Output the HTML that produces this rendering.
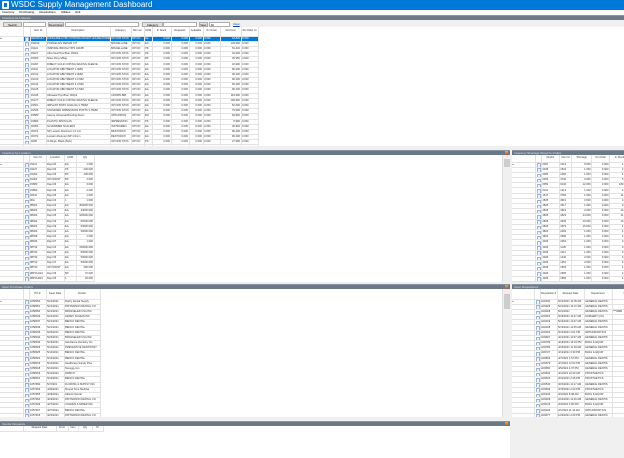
<!DOCTYPE html>
<html><head><meta charset="utf-8"><style>
*{margin:0;padding:0;box-sizing:border-box}
body{width:624px;height:458px;overflow:hidden;background:#f0f0f0;font-family:"Liberation Sans",sans-serif;position:relative}
.abs{position:absolute}
.title{left:0;top:0;width:624px;height:10px;background:#0078d7;color:#fff;font-size:8px;line-height:10px;padding-left:11px}
.logo{left:2px;top:1px;width:7px;height:8px;background:#fff;border-radius:1px}
.logo:after{content:"";position:absolute;left:2px;top:2px;width:3px;height:4px;background:#0078d7}
.menu{left:0;top:10px;width:624px;height:5px;font-size:3px;line-height:5px;background:#fafafa;color:#000}
.menu span{margin:0 3px 0 2px}
.ph{height:5px;background:#6b7886;border-top:1px solid #8794a1;color:#dfe4ea;font-size:3px;line-height:4px;padding-left:2px}
.ph i{position:absolute;right:2px;top:0;width:3px;height:4px;background:linear-gradient(#f0b020,#e04020)}
.white{background:#fff}
table{border-collapse:collapse;table-layout:fixed;font-size:2.6px;color:#333;background:#fff}
td,th{height:5.2px;border-right:0.5px solid #e2e2e2;border-bottom:0.5px solid #e2e2e2;white-space:nowrap;overflow:hidden;padding:0 0.6px;line-height:4px;font-weight:normal}
th{text-align:center;background:#fff}
td.r{text-align:right}
td.h{background:#fff}
td.ic{position:relative}
td.ic:after{content:"";position:absolute;left:1.5px;top:0.8px;width:2px;height:2.5px;border:0.3px solid #9ab4d6;background:#f2f6fc}
tr.sel td{background:#0078d7;color:#fff}
tr.sel td.h{background:#fff;color:#000}
.sb{background:#f0f0f0;border-left:0.5px solid #ddd}
.sb i{position:absolute;left:1px;width:6px;background:#cdcdcd}
.btn{top:22px;height:5px;font-size:2.8px;line-height:5px;text-align:center;background:#e1e1e1;border:0.5px solid #adadad}
.cmb{top:22px;height:5px;background:#fff;border:0.5px solid #adadad}
</style></head><body>
<div class="abs title">WSDC Supply Management Dashboard</div>
<div class="abs logo"></div>
<div class="abs menu"><span>Inventory</span><span>Purchasing</span><span>Requisitions</span><span>Utilities</span><span>Exit</span></div>
<div class="abs ph" style="left:0;top:15px;width:624px">Inventory At A Glance</div>
<div class="abs btn" style="left:3px;width:19px">Search Items:</div>
<div class="abs cmb" style="left:23px;width:23px"></div>
<div class="abs btn" style="left:48px;width:16px">Description:</div>
<div class="abs cmb" style="left:65px;width:74px"></div>
<div class="abs btn" style="left:142px;width:21px">Category Filter:</div>
<div class="abs cmb" style="left:163px;width:34px"></div>
<div class="abs btn" style="left:199px;width:9px">View:</div>
<div class="abs cmb" style="left:209px;width:21px;font-size:2.8px;line-height:4px">&nbsp;All</div>
<div class="abs" style="left:233px;top:22px;font-size:2.8px;line-height:5px;color:#0645ad;text-decoration:underline">Clear</div>

<div class="abs white" style="left:0;top:27px;width:624px;height:119px"></div>
<table class="abs" style="left:0;top:27px;width:258px">
<colgroup><col style="width:23px"><col style="width:7px"><col style="width:16px"><col style="width:64px"><col style="width:21px"><col style="width:13px"><col style="width:8px"><col style="width:19px"><col style="width:18px"><col style="width:14px"><col style="width:17px"><col style="width:21px"><col style="width:17px"></colgroup>
<tr><th style="height:9px"></th><th></th><th>Item Id</th><th>Description</th><th>Category</th><th>Bin Loc</th><th>UOM</th><th>In Stock</th><th>Requests</th><th>Available</th><th>On Order</th><th>Std Cost</th><th>Re-Order At</th></tr>
<tr class="sel"><td class="h">▸</td><td class="ic"></td><td>3324PCA-T</td><td>LONGUIDE UTPH 3 PRONG MOUNT HOUSE POWER</td><td>OP NON STCK</td><td>OP NO</td><td>EA</td><td class="r">0.000</td><td class="r">0.000</td><td class="r">0.000</td><td>0.000</td><td class="r">18.820</td><td>0.000</td></tr>
<tr><td class="h"></td><td class="ic"></td><td>#11190</td><td>PORCELAIN REPAIR KIT</td><td>MISCELLANE</td><td>OP NO</td><td>EA</td><td class="r">0.000</td><td class="r">0.000</td><td class="r">0.000</td><td>0.000</td><td class="r">103.990</td><td>0.000</td></tr>
<tr><td class="h"></td><td class="ic"></td><td>#1121</td><td>INSPIRAL BRUSH TIPS 100/PK</td><td>MISCELLANE</td><td>OP NO</td><td>PK</td><td class="r">0.000</td><td class="r">0.000</td><td class="r">0.000</td><td>0.000</td><td class="r">63.440</td><td>0.000</td></tr>
<tr><td class="h"></td><td class="ic"></td><td>#1127</td><td>Ultra Seal Tips Blue 100/pk</td><td>OP NON STCK</td><td>OP NO</td><td>PK</td><td class="r">0.000</td><td class="r">0.000</td><td class="r">0.000</td><td>0.000</td><td class="r">34.490</td><td>0.000</td></tr>
<tr><td class="h"></td><td class="ic"></td><td>#1302</td><td>Mixer Ring 1/Bag</td><td>OP NON STCK</td><td>OP NO</td><td>BX</td><td class="r">2.000</td><td class="r">0.000</td><td class="r">2.000</td><td>0.000</td><td class="r">36.950</td><td>0.000</td></tr>
<tr><td class="h"></td><td class="ic"></td><td>#1397</td><td>DIRECT GOLD COPING WAXING SLEEVE</td><td>OP NON STCK</td><td>OP NO</td><td>EA</td><td class="r">0.000</td><td class="r">0.000</td><td class="r">0.000</td><td>0.000</td><td class="r">32.990</td><td>0.000</td></tr>
<tr><td class="h"></td><td class="ic"></td><td>#1411</td><td>LOCATOR ABUTMENT 1.0MM</td><td>OP NON STCK</td><td>OP NO</td><td>EA</td><td class="r">0.000</td><td class="r">0.000</td><td class="r">0.000</td><td>0.000</td><td class="r">96.200</td><td>0.000</td></tr>
<tr><td class="h"></td><td class="ic"></td><td>#1412</td><td>LOCATOR ABUTMENT 2.0MM</td><td>OP NON STCK</td><td>OP NO</td><td>EA</td><td class="r">0.000</td><td class="r">0.000</td><td class="r">0.000</td><td>0.000</td><td class="r">96.200</td><td>0.000</td></tr>
<tr><td class="h"></td><td class="ic"></td><td>#1413</td><td>LOCATOR ABUTMENT 3.0 MM</td><td>OP NON STCK</td><td>OP NO</td><td>EA</td><td class="r">0.000</td><td class="r">0.000</td><td class="r">0.000</td><td>0.000</td><td class="r">96.200</td><td>0.000</td></tr>
<tr><td class="h"></td><td class="ic"></td><td>#1414</td><td>LOCATOR ABUTMENT 4.0 MM</td><td>OP NON STCK</td><td>OP NO</td><td>EA</td><td class="r">0.000</td><td class="r">0.000</td><td class="r">0.000</td><td>0.000</td><td class="r">96.200</td><td>0.000</td></tr>
<tr><td class="h"></td><td class="ic"></td><td>#1415</td><td>LOCATOR ABUTMENT 5.0 MM</td><td>OP NON STCK</td><td>OP NO</td><td>EA</td><td class="r">0.000</td><td class="r">0.000</td><td class="r">0.000</td><td>0.000</td><td class="r">96.200</td><td>0.000</td></tr>
<tr><td class="h"></td><td class="ic"></td><td>#1436</td><td>Ultraseal Tips Blue 100/pk</td><td>CROWN BRI</td><td>OP NO</td><td>EA</td><td class="r">0.000</td><td class="r">0.000</td><td class="r">0.000</td><td>0.000</td><td class="r">119.990</td><td>0.000</td></tr>
<tr><td class="h"></td><td class="ic"></td><td>#1477</td><td>DIRECT GOLD COPING WAXING SLEEVE</td><td>OP NON STCK</td><td>OP NO</td><td>EA</td><td class="r">0.000</td><td class="r">0.000</td><td class="r">0.000</td><td>0.000</td><td class="r">199.990</td><td>0.000</td></tr>
<tr><td class="h"></td><td class="ic"></td><td>#1501</td><td>IMPLANT BODY ANALOG 3.75MM</td><td>OP NON STCK</td><td>OP NO</td><td>EA</td><td class="r">0.000</td><td class="r">0.000</td><td class="r">0.000</td><td>0.000</td><td class="r">52.600</td><td>0.000</td></tr>
<tr><td class="h"></td><td class="ic"></td><td>#1536</td><td>STANDARD IMPRESSION POSTS 3.75MM</td><td>OP NON STCK</td><td>OP NO</td><td>EA</td><td class="r">0.000</td><td class="r">0.000</td><td class="r">0.000</td><td>0.000</td><td class="r">79.500</td><td>0.000</td></tr>
<tr><td class="h"></td><td class="ic"></td><td>#1580</td><td>Assure Universal Bonding Resin</td><td>ORTHODON</td><td>OP NO</td><td>BO</td><td class="r">0.000</td><td class="r">0.000</td><td class="r">0.000</td><td>0.000</td><td class="r">69.990</td><td>0.000</td></tr>
<tr><td class="h"></td><td class="ic"></td><td>#1890</td><td>PLASTIC SPATULAS</td><td>IMPRESSION</td><td>OP NO</td><td>PK</td><td class="r">0.000</td><td class="r">0.000</td><td class="r">0.000</td><td>0.000</td><td class="r">8.990</td><td>0.000</td></tr>
<tr><td class="h"></td><td class="ic"></td><td>#2054</td><td>SCHORMER SCALERS</td><td>INSTRUMEN</td><td>OP NO</td><td>EA</td><td class="r">0.000</td><td class="r">0.000</td><td class="r">0.000</td><td>0.000</td><td class="r">30.900</td><td>0.000</td></tr>
<tr><td class="h"></td><td class="ic"></td><td>#2071</td><td>NP Locator Abutment 1.0 mm</td><td>RESTORATI</td><td>OP NO</td><td>EA</td><td class="r">0.000</td><td class="r">0.000</td><td class="r">0.000</td><td>0.000</td><td class="r">96.200</td><td>0.000</td></tr>
<tr><td class="h"></td><td class="ic"></td><td>#2072</td><td>Locator Abutment NP 4.0mm</td><td>RESTORATI</td><td>OP NO</td><td>EA</td><td class="r">0.000</td><td class="r">0.000</td><td class="r">0.000</td><td>0.000</td><td class="r">96.200</td><td>0.000</td></tr>
<tr><td class="h"></td><td class="ic"></td><td>#206</td><td>O-Rings, Black (5/pk)</td><td>OP NON STCK</td><td>OP NO</td><td>PK</td><td class="r">0.000</td><td class="r">0.000</td><td class="r">0.000</td><td>0.000</td><td class="r">27.990</td><td>0.000</td></tr>
<tr><td class="h"></td><td class="ic"></td><td>#2013</td><td>Rubber Dam Punch Set</td><td>INSTRUMEN</td><td>OP NO</td><td>EA</td><td class="r">0.000</td><td class="r">0.000</td><td class="r">0.000</td><td>0.000</td><td class="r">5.570</td><td>0.000</td></tr>
</table>
<div class="abs" style="left:0;top:146px;width:624px;height:4px;background:#f0f0f0"></div>

<div class="abs ph" style="left:0;top:150px;width:510px">Inventory by Location<i></i></div>
<div class="abs white" style="left:0;top:155px;width:502px;height:127px;overflow:hidden">
<table style="width:94px">
<colgroup><col style="width:23px"><col style="width:6px"><col style="width:17px"><col style="width:18px"><col style="width:12px"><col style="width:18px"></colgroup>
<tr><th style="height:7px"></th><th></th><th>Item Id</th><th>Location</th><th>UOM</th><th>Qty</th></tr>
<tr><td>▸</td><td class="ic"></td><td>#1121</td><td>Dept 04</td><td>EA</td><td class="r">1.000</td></tr>
<tr><td></td><td class="ic"></td><td>#1127</td><td>Dept 04</td><td>PK</td><td class="r">200.000</td></tr>
<tr><td></td><td class="ic"></td><td>#1302</td><td>Dept 06</td><td>BX</td><td class="r">100.000</td></tr>
<tr><td></td><td class="ic"></td><td>#1302</td><td>OP NONST</td><td>BX</td><td class="r">2.000</td></tr>
<tr><td></td><td class="ic"></td><td>#1580</td><td>Dept 06</td><td>EA</td><td class="r">3.000</td></tr>
<tr><td></td><td class="ic"></td><td>#1890</td><td>Dept 06</td><td>EA</td><td class="r">2.000</td></tr>
<tr><td></td><td class="ic"></td><td>#2611</td><td>Dept 06</td><td>EA</td><td class="r">1.000</td></tr>
<tr><td></td><td class="ic"></td><td>#6A</td><td>Dept 04</td><td>1</td><td class="r">1.000</td></tr>
<tr><td></td><td class="ic"></td><td>#8024</td><td>Dept 04</td><td>EA</td><td class="r">300000.000</td></tr>
<tr><td></td><td class="ic"></td><td>#8024</td><td>Dept 06</td><td>EA</td><td class="r">44000.000</td></tr>
<tr><td></td><td class="ic"></td><td>#8024</td><td>Dept 06</td><td>EA</td><td class="r">100000.000</td></tr>
<tr><td></td><td class="ic"></td><td>#8024</td><td>Dept 09</td><td>EA</td><td class="r">50000.000</td></tr>
<tr><td></td><td class="ic"></td><td>#8024</td><td>Dept 09</td><td>EA</td><td class="r">50000.000</td></tr>
<tr><td></td><td class="ic"></td><td>#8024</td><td>Dept 10</td><td>EA</td><td class="r">50000.000</td></tr>
<tr><td></td><td class="ic"></td><td>#8036</td><td>Dept 04</td><td>EA</td><td class="r">1.000</td></tr>
<tr><td></td><td class="ic"></td><td>#8036</td><td>Dept 07</td><td>EA</td><td class="r">1.000</td></tr>
<tr><td></td><td class="ic"></td><td>#8732</td><td>Dept 04</td><td>EA</td><td class="r">150000.000</td></tr>
<tr><td></td><td class="ic"></td><td>#8732</td><td>Dept 05</td><td>EA</td><td class="r">50000.000</td></tr>
<tr><td></td><td class="ic"></td><td>#8732</td><td>Dept 06</td><td>EA</td><td class="r">50000.000</td></tr>
<tr><td></td><td class="ic"></td><td>#8732</td><td>Dept 07</td><td>EA</td><td class="r">50000.000</td></tr>
<tr><td></td><td class="ic"></td><td>#8732</td><td>OP NONST</td><td>EA</td><td class="r">400.000</td></tr>
<tr><td></td><td class="ic"></td><td>#8PCH124</td><td>Dept 06</td><td>BX</td><td class="r">72.000</td></tr>
<tr><td></td><td class="ic"></td><td>#8PCH201</td><td>Dept 06</td><td>1</td><td class="r">40.000</td></tr>
<tr><td></td><td class="ic"></td><td></td><td></td><td></td><td></td></tr>
</table></div>
<div class="abs sb" style="left:502px;top:155px;width:8px;height:127px"><i style="top:4px;height:8px"></i></div>

<div class="abs ph" style="left:512px;top:150px;width:112px">Inventory Shortage (Need to Order)</div>
<div class="abs white" style="left:512px;top:155px;width:112px;height:127px;overflow:hidden">
<table style="width:118px">
<colgroup><col style="width:22px"><col style="width:6px"><col style="width:17px"><col style="width:12px"><col style="width:19px"><col style="width:17px"><col style="width:19px"></colgroup>
<tr><th style="height:7px"></th><th></th><th>Vendor</th><th>Item Id</th><th>Shortage</th><th>On Order</th><th>In Stock</th></tr>
<tr><td>▸</td><td class="ic"></td><td>0007</td><td>1312</td><td class="r">5.000</td><td class="r">0.000</td><td class="r">1.000</td></tr>
<tr><td></td><td class="ic"></td><td>0036</td><td>1532</td><td class="r">1.000</td><td class="r">0.000</td><td class="r">3.000</td></tr>
<tr><td></td><td class="ic"></td><td>0053</td><td>1066</td><td class="r">1.000</td><td class="r">0.000</td><td class="r">4.000</td></tr>
<tr><td></td><td class="ic"></td><td>0053</td><td>4740</td><td class="r">3.000</td><td class="r">0.000</td><td class="r">5.000</td></tr>
<tr><td></td><td class="ic"></td><td>0053</td><td>9140</td><td class="r">12.000</td><td class="r">0.000</td><td class="r">180.000</td></tr>
<tr><td></td><td class="ic"></td><td>0161</td><td>1213</td><td class="r">1.000</td><td class="r">0.000</td><td class="r">3.000</td></tr>
<tr><td></td><td class="ic"></td><td>1617</td><td>3784</td><td class="r">1.000</td><td class="r">0.000</td><td class="r">11.000</td></tr>
<tr><td></td><td class="ic"></td><td>2825</td><td>4613</td><td class="r">3.000</td><td class="r">0.000</td><td class="r">2.000</td></tr>
<tr><td></td><td class="ic"></td><td>2825</td><td>4617</td><td class="r">1.000</td><td class="r">0.000</td><td class="r">9.000</td></tr>
<tr><td></td><td class="ic"></td><td>2825</td><td>4619</td><td class="r">2.000</td><td class="r">0.000</td><td class="r">10.000</td></tr>
<tr><td></td><td class="ic"></td><td>2825</td><td>4623</td><td class="r">24.000</td><td class="r">0.000</td><td class="r">11.000</td></tr>
<tr><td></td><td class="ic"></td><td>2825</td><td>4639</td><td class="r">10.000</td><td class="r">0.000</td><td class="r">10.000</td></tr>
<tr><td></td><td class="ic"></td><td>2825</td><td>4679</td><td class="r">16.000</td><td class="r">0.000</td><td class="r">4.000</td></tr>
<tr><td></td><td class="ic"></td><td>3824</td><td>2093</td><td class="r">1.000</td><td class="r">0.000</td><td class="r">4.000</td></tr>
<tr><td></td><td class="ic"></td><td>3824</td><td>2596</td><td class="r">1.000</td><td class="r">0.000</td><td class="r">2.000</td></tr>
<tr><td></td><td class="ic"></td><td>4026</td><td>1054</td><td class="r">1.000</td><td class="r">0.000</td><td class="r">0.000</td></tr>
<tr><td></td><td class="ic"></td><td>4026</td><td>1136</td><td class="r">1.000</td><td class="r">0.000</td><td class="r">0.000</td></tr>
<tr><td></td><td class="ic"></td><td>4026</td><td>1411</td><td class="r">1.000</td><td class="r">0.000</td><td class="r">0.000</td></tr>
<tr><td></td><td class="ic"></td><td>4026</td><td>1440</td><td class="r">2.000</td><td class="r">0.000</td><td class="r">0.000</td></tr>
<tr><td></td><td class="ic"></td><td>4026</td><td>1451</td><td class="r">3.000</td><td class="r">0.000</td><td class="r">0.000</td></tr>
<tr><td></td><td class="ic"></td><td>4026</td><td>1504</td><td class="r">1.000</td><td class="r">0.000</td><td class="r">1.000</td></tr>
<tr><td></td><td class="ic"></td><td>4026</td><td>1505</td><td class="r">1.000</td><td class="r">0.000</td><td class="r">2.000</td></tr>
<tr><td></td><td class="ic"></td><td>4026</td><td>1555</td><td class="r">1.000</td><td class="r">0.000</td><td class="r">1.000</td></tr>
</table></div>

<div class="abs ph" style="left:0;top:284px;width:510px">Open Purchase Orders<i></i></div>
<div class="abs white" style="left:0;top:289px;width:502px;height:128px;overflow:hidden">
<table style="width:100px">
<colgroup><col style="width:23px"><col style="width:6px"><col style="width:17px"><col style="width:18px"><col style="width:36px"></colgroup>
<tr><th style="height:10px"></th><th></th><th>PO #</th><th>Issue Date</th><th>Vendor</th></tr>
<tr><td>▸</td><td class="ic"></td><td>1058052</td><td>5/21/2021</td><td>Darby Dental Supply</td></tr>
<tr><td></td><td class="ic"></td><td>1058051</td><td>5/21/2021</td><td>PATTERSON DENTAL CO</td></tr>
<tr><td></td><td class="ic"></td><td>1058050</td><td>5/21/2021</td><td>BRASSELER USA INC</td></tr>
<tr><td></td><td class="ic"></td><td>1058049</td><td>5/21/2021</td><td>HENRY SCHEIN INC</td></tr>
<tr><td></td><td class="ic"></td><td>1058047</td><td>5/21/2021</td><td>BENCO DENTAL</td></tr>
<tr><td></td><td class="ic"></td><td>1058046</td><td>5/21/2021</td><td>BENCO DENTAL</td></tr>
<tr><td></td><td class="ic"></td><td>1058045</td><td>5/20/2021</td><td>BENCO DENTAL</td></tr>
<tr><td></td><td class="ic"></td><td>1058044</td><td>5/20/2021</td><td>BRASSELER USA INC</td></tr>
<tr><td></td><td class="ic"></td><td>1058039</td><td>5/19/2021</td><td>Hanslance Dentistry Inc</td></tr>
<tr><td></td><td class="ic"></td><td>1058026</td><td>5/14/2021</td><td>PREVENTIVE DENTISTRY</td></tr>
<tr><td></td><td class="ic"></td><td>1058025</td><td>5/14/2021</td><td>BENCO DENTAL</td></tr>
<tr><td></td><td class="ic"></td><td>1058022</td><td>5/13/2021</td><td>BENCO DENTAL</td></tr>
<tr><td></td><td class="ic"></td><td>1058019</td><td>5/12/2021</td><td>Healthcare Supply Plus</td></tr>
<tr><td></td><td class="ic"></td><td>1058018</td><td>5/12/2021</td><td>Nessgg.com</td></tr>
<tr><td></td><td class="ic"></td><td>1058016</td><td>5/12/2021</td><td>DRMCO</td></tr>
<tr><td></td><td class="ic"></td><td>1058001</td><td>5/10/2021</td><td>BENCO DENTAL</td></tr>
<tr><td></td><td class="ic"></td><td>1057992</td><td>5/7/2021</td><td>FLORING &amp; SUPPLY INC</td></tr>
<tr><td></td><td class="ic"></td><td>1057969</td><td>4/30/2021</td><td>Mound Time Medical</td></tr>
<tr><td></td><td class="ic"></td><td>1057965</td><td>4/29/2021</td><td>Atlantic Dental</td></tr>
<tr><td></td><td class="ic"></td><td>1057964</td><td>4/29/2021</td><td>PATTERSON DENTAL CO</td></tr>
<tr><td></td><td class="ic"></td><td>1057939</td><td>4/27/2021</td><td>CHADDS &amp; MINER INC</td></tr>
<tr><td></td><td class="ic"></td><td>1057937</td><td>4/27/2021</td><td>BENCO DENTAL</td></tr>
<tr><td></td><td class="ic"></td><td>1057915</td><td>4/22/2021</td><td>PATTERSON DENTAL CO</td></tr>
</table></div>
<div class="abs sb" style="left:502px;top:289px;width:8px;height:128px"><i style="top:5px;height:15px"></i></div>

<div class="abs ph" style="left:512px;top:284px;width:112px">Open Requisitions</div>
<div class="abs white" style="left:512px;top:289px;width:112px;height:128px;overflow:hidden">
<table style="width:130px">
<colgroup><col style="width:22px"><col style="width:6px"><col style="width:17px"><col style="width:27px"><col style="width:28px"><col style="width:30px"></colgroup>
<tr><th style="height:10px"></th><th></th><th>Requisition #</th><th>Request Date</th><th>Department</th><th>Notes</th></tr>
<tr><td>▸</td><td class="ic"></td><td>H04030</td><td>5/21/2021 10:35 AM</td><td>GENERAL DENTIS</td><td></td></tr>
<tr><td></td><td class="ic"></td><td>H04029</td><td>5/21/2021 10:27 AM</td><td>GENERAL DENTIS</td><td></td></tr>
<tr><td></td><td class="ic"></td><td>H04028</td><td>5/21/2021</td><td>GENERAL DENTIS</td><td>***WEB</td></tr>
<tr><td></td><td class="ic"></td><td>H04024</td><td>5/18/2021 11:47 AM</td><td>SURGERY (OC)</td><td></td></tr>
<tr><td></td><td class="ic"></td><td>H04019</td><td>5/13/2021 11:07 AM</td><td>GENERAL DENTIS</td><td></td></tr>
<tr><td></td><td class="ic"></td><td>H04018</td><td>5/13/2021 11:05 AM</td><td>GENERAL DENTIS</td><td></td></tr>
<tr><td></td><td class="ic"></td><td>H04010</td><td>5/12/2021 2:01 PM</td><td>ORTHODONTICS</td><td></td></tr>
<tr><td></td><td class="ic"></td><td>H03927</td><td>4/21/2021 11:07 AM</td><td>GENERAL DENTIS</td><td></td></tr>
<tr><td></td><td class="ic"></td><td>H03789</td><td>4/16/2021 12:19 PM</td><td>BLDG &amp; EQUIP</td><td></td></tr>
<tr><td></td><td class="ic"></td><td>H03780</td><td>4/15/2021 11:18 AM</td><td>GENERAL DENTIS</td><td></td></tr>
<tr><td></td><td class="ic"></td><td>H03727</td><td>4/12/2021 3:30 PM</td><td>BLDG &amp; EQUIP</td><td></td></tr>
<tr><td></td><td class="ic"></td><td>H03693</td><td>4/7/2021 1:57 PM</td><td>GENERAL DENTIS</td><td></td></tr>
<tr><td></td><td class="ic"></td><td>H03679</td><td>4/7/2021 12:04 PM</td><td>GENERAL DENTIS</td><td></td></tr>
<tr><td></td><td class="ic"></td><td>H03650</td><td>4/5/2021 4:07 PM</td><td>GENERAL DENTIS</td><td></td></tr>
<tr><td></td><td class="ic"></td><td>H03633</td><td>4/1/2021 10:30 AM</td><td>PROSTHETICS</td><td></td></tr>
<tr><td></td><td class="ic"></td><td>H03626</td><td>3/31/2021 2:25 PM</td><td>PROSTHETICS</td><td></td></tr>
<tr><td></td><td class="ic"></td><td>H03530</td><td>3/24/2021 11:17 AM</td><td>GENERAL DENTIS</td><td></td></tr>
<tr><td></td><td class="ic"></td><td>H03456</td><td>3/15/2021 2:20 PM</td><td>PROSTHETICS</td><td></td></tr>
<tr><td></td><td class="ic"></td><td>H03249</td><td>3/3/2021 8:38 AM</td><td>BLDG &amp; EQUIP</td><td></td></tr>
<tr><td></td><td class="ic"></td><td>H03209</td><td>2/24/2021 11:46 AM</td><td>GENERAL DENTIS</td><td></td></tr>
<tr><td></td><td class="ic"></td><td>H03123</td><td>2/3/2021 1:50 PM</td><td>BLDG &amp; EQUIP</td><td></td></tr>
<tr><td></td><td class="ic"></td><td>H03106</td><td>2/1/2021 11:14 AM</td><td>ORTHODONTICS</td><td></td></tr>
<tr><td></td><td class="ic"></td><td>H03077</td><td>1/26/2021 2:20 PM</td><td>GENERAL DENTIS</td><td></td></tr>
</table></div>

<div class="abs ph" style="left:0;top:421px;width:510px">Vendor Requests<i></i></div>
<div class="abs white" style="left:0;top:426px;width:510px;height:32px">
<table style="width:103px">
<colgroup><col style="width:23px"><col style="width:33px"><col style="width:12px"><col style="width:10px"><col style="width:14px"><col style="width:11px"></colgroup>
<tr><th></th><th>Request Date</th><th>From</th><th>Item</th><th>Qty</th><th>To</th></tr>
</table></div>
</body></html>
